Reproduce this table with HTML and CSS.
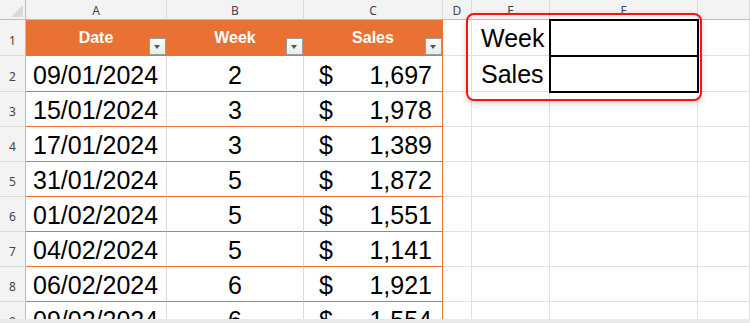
FILE: index.html
```html
<!DOCTYPE html>
<html>
<head>
<meta charset="utf-8">
<link rel="stylesheet" href="styles.css">
</head>
<body>
<div class="sheet">
  <div class="grid">
    <div class="c corner"><span class="tri"></span></div>
    <div class="c ch">A</div>
    <div class="c ch">B</div>
    <div class="c ch">C</div>
    <div class="c ch">D</div>
    <div class="c ch">E</div>
    <div class="c ch">F</div>
    <div class="c ch"></div>

    <div class="c rh">1</div>
    <div class="c th">Date<span class="dd"></span></div>
    <div class="c th">Week<span class="dd"></span></div>
    <div class="c th last">Sales<span class="dd"></span></div>
    <div class="c"></div>
    <div class="c lbl">Week</div>
    <div class="c inp"></div>
    <div class="c"></div>

    <div class="c rh">2</div>
    <div class="c td">09/01/2024</div>
    <div class="c td mid">2</div>
    <div class="c td money last"><span>$</span><span>1,697</span></div>
    <div class="c"></div>
    <div class="c lbl">Sales</div>
    <div class="c inp"></div>
    <div class="c"></div>

    <div class="c rh">3</div>
    <div class="c td">15/01/2024</div>
    <div class="c td mid">3</div>
    <div class="c td money last"><span>$</span><span>1,978</span></div>
    <div class="c"></div>
    <div class="c"></div>
    <div class="c"></div>
    <div class="c"></div>

    <div class="c rh">4</div>
    <div class="c td">17/01/2024</div>
    <div class="c td mid">3</div>
    <div class="c td money last"><span>$</span><span>1,389</span></div>
    <div class="c"></div>
    <div class="c"></div>
    <div class="c"></div>
    <div class="c"></div>

    <div class="c rh">5</div>
    <div class="c td">31/01/2024</div>
    <div class="c td mid">5</div>
    <div class="c td money last"><span>$</span><span>1,872</span></div>
    <div class="c"></div>
    <div class="c"></div>
    <div class="c"></div>
    <div class="c"></div>

    <div class="c rh">6</div>
    <div class="c td">01/02/2024</div>
    <div class="c td mid">5</div>
    <div class="c td money last"><span>$</span><span>1,551</span></div>
    <div class="c"></div>
    <div class="c"></div>
    <div class="c"></div>
    <div class="c"></div>

    <div class="c rh">7</div>
    <div class="c td">04/02/2024</div>
    <div class="c td mid">5</div>
    <div class="c td money last"><span>$</span><span>1,141</span></div>
    <div class="c"></div>
    <div class="c"></div>
    <div class="c"></div>
    <div class="c"></div>

    <div class="c rh">8</div>
    <div class="c td">06/02/2024</div>
    <div class="c td mid">6</div>
    <div class="c td money last"><span>$</span><span>1,921</span></div>
    <div class="c"></div>
    <div class="c"></div>
    <div class="c"></div>
    <div class="c"></div>

    <div class="c rh">9</div>
    <div class="c td">09/02/2024</div>
    <div class="c td mid">6</div>
    <div class="c td money last"><span>$</span><span>1,554</span></div>
    <div class="c"></div>
    <div class="c"></div>
    <div class="c"></div>
    <div class="c"></div>
  </div>
  <div class="callout"></div>
</div>
<div class="hbar"></div>
</body>
</html>
```
FILE: styles.css
```css
* { box-sizing: border-box; }
html, body { margin: 0; padding: 0; background: #fff; }
body {
  width: 750px;
  height: 323px;
  overflow: hidden;
  font-family: "Liberation Sans", Arial, sans-serif;
  color: #000;
}
.sheet {
  position: relative;
  height: 319px;
  overflow: hidden;
}
.grid {
  display: grid;
  grid-template-columns: 26px 141px 137px 139px 29px 78px 148px 1fr;
  grid-template-rows: 20px 36px 36px 35px 35px 35px 35px 35px 35px 35px;
}
.c {
  border-right: 1px solid #e1e1e1;
  border-bottom: 1px solid #e1e1e1;
  min-width: 0;
}
.corner {
  background: #f3f3f3;
  border-right: 1px solid #bdbdbd;
  border-bottom: 1px solid #bdbdbd;
  display: flex;
  align-items: flex-end;
  justify-content: flex-end;
  padding: 0 2px 2px 0;
}
.tri {
  width: 12px;
  height: 12px;
  background: #d9d9d9;
  clip-path: polygon(100% 0, 100% 100%, 0 100%);
}
.ch {
  background: #f3f3f3;
  border-bottom: 1px solid #bdbdbd;
  border-right-color: #dadada;
  font-family: "Noto Sans", "Open Sans", sans-serif;
  font-size: 12px;
  color: #444;
  display: flex;
  align-items: center;
  justify-content: center;
  padding-top: 1px;
}
.rh {
  background: #f3f3f3;
  border-right: 1px solid #bdbdbd;
  border-bottom-color: #dadada;
  font-family: "Noto Sans", "Open Sans", sans-serif;
  font-size: 12px;
  color: #444;
  display: flex;
  align-items: center;
  justify-content: center;
  padding-top: 5px;
}
.th {
  position: relative;
  background: #e97132;
  border-right-color: #e97132;
  border-bottom-color: #e97132;
  color: #fff;
  font-weight: bold;
  font-size: 16px;
  display: flex;
  align-items: center;
  justify-content: center;
  padding-top: 1px;
}
.dd {
  position: absolute;
  right: 0;
  bottom: 0;
  width: 17px;
  height: 17px;
  border: 1px solid #9c9c9c;
  background: linear-gradient(#fbfbfb, #e9ebee);
}
.dd::after {
  content: "";
  position: absolute;
  left: 4px;
  top: 6px;
  border-left: 3.5px solid transparent;
  border-right: 3.5px solid transparent;
  border-top: 4px solid #555;
}
.td {
  border-right-color: #dadada;
  border-bottom-color: #e97132;
  font-size: 25px;
  line-height: 28px;
  display: flex;
  align-items: flex-end;
  padding: 0 0 2px 7px;
}
.mid {
  justify-content: center;
  padding-left: 0;
}
.money {
  justify-content: space-between;
  padding-left: 15px;
  padding-right: 10px;
}
.last {
  border-right-color: #e97132;
}
.lbl {
  font-size: 25px;
  line-height: 28px;
  display: flex;
  align-items: flex-end;
  padding: 0 0 3px 9px;
}
.inp {
  position: relative;
  z-index: 1;
  outline: 2px solid #000;
  outline-offset: -1px;
}
.callout {
  position: absolute;
  left: 466px;
  top: 13px;
  width: 236px;
  height: 88px;
  border: 2px solid #ff1111;
  border-radius: 8px;
  box-shadow: 0 2px 6px rgba(0, 0, 0, 0.18);
  z-index: 2;
}
.hbar {
  height: 4px;
  background: #e9e9e9;
}
```
